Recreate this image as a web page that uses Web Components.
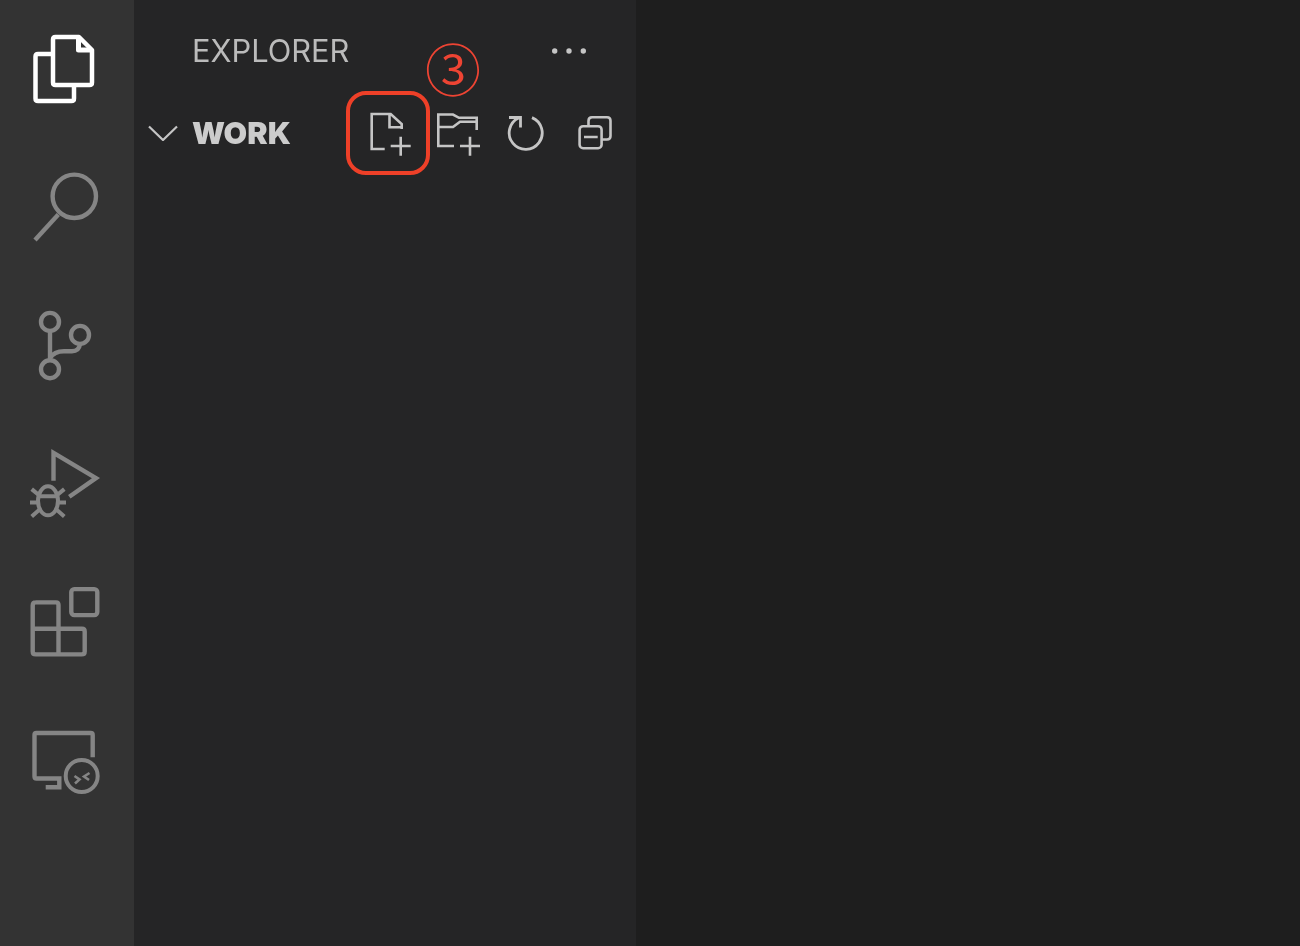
<!DOCTYPE html>
<html lang="en">
<head>
    <meta charset="UTF-8">
    <title>Explorer</title>
    <style>
        html, body { margin: 0; height: 100%; background: #1e1e1e; }
        body { font-family: Inter, "Liberation Sans", sans-serif; overflow: hidden; }
        vs-activity-icon svg, vs-tool-icon svg { display: block; }
    </style>
</head>
<body>
<vs-window>
    <vs-activity-bar slot="activity">
        <vs-activity-icon active>
            <svg width="134" height="138.4" viewBox="0 0 134 138.4" fill="none" stroke="currentColor" stroke-width="4.500" stroke-linejoin="round">
                <path d="M53 54H38q-2.500 0-2.500 2.500V98.500q0 2.500 2.500 2.500H71.500q2.500 0 2.500-2.500V85"/>
                <path d="M55.500 37H79L92 50V82.500q0 2.500-2.500 2.500H55.500q-2.500 0-2.500-2.500V39.500q0-2.500 2.500-2.500z"/>
                <path d="M78.500 37V50H92" stroke-width="5"/>
            </svg>
        </vs-activity-icon>
        <vs-activity-icon>
            <svg width="134" height="138.4" viewBox="0 138.400 134 138.400" fill="none" stroke="currentColor" stroke-width="4.400">
                <circle cx="74.300" cy="196.700" r="21.700"/>
                <path d="M58.300 215L35 240.500"/>
            </svg>
        </vs-activity-icon>
        <vs-activity-icon>
            <svg width="134" height="138.400" viewBox="0 276.800 134 138.400" fill="none" stroke="currentColor" stroke-width="4.400">
                <circle cx="50" cy="321.700" r="9"/>
                <circle cx="80" cy="334.700" r="9"/>
                <circle cx="50" cy="369" r="9"/>
                <path d="M50 331V360M80 344q-1 7-8 7H64q-10 0-14 7"/>
            </svg>
        </vs-activity-icon>
        <vs-activity-icon>
            <svg width="134" height="138.400" viewBox="0 415.200 134 138.400" fill="none" stroke="currentColor" stroke-width="4.400">
                <path d="M53.500 481V453L96 478.300L69.300 497"/>
                <g stroke-width="4">
                    <ellipse cx="48" cy="501" rx="10" ry="14.500"/>
                    <path d="M38 496.500H58M31.700 489.300L38.500 495M64.300 489.300L57.500 495M30 502.700H38.300M66 502.700H58M31.700 516.700L39.300 510M64.300 516.700L56.700 510"/>
                </g>
            </svg>
        </vs-activity-icon>
        <vs-activity-icon>
            <svg width="134" height="138.400" viewBox="0 553.600 134 138.400" fill="none" stroke="currentColor" stroke-width="4.400">
                <rect x="71.300" y="588.700" width="26" height="26" rx="3"/>
                <path d="M35.500 602H56q2.500 0 2.500 2.500V628.300H82q2.700 0 2.700 2.700V651q0 3-3 3H35.700q-3 0-3-3V605q0-3 3-3zM32.700 628.300H58.500V654"/>
            </svg>
        </vs-activity-icon>
        <vs-activity-icon>
            <svg width="134" height="138.400" viewBox="0 692 134 138.400" fill="none" stroke="currentColor" stroke-width="4.400">
                <path d="M92.700 757.300V735q0-2-2-2H36.500q-2 0-2 2V776.500q0 2 2 2H59.300V787.300H45.700"/>
                <circle cx="81.700" cy="776" r="16" fill="#333" stroke-width="4"/>
                <path d="M74.500 776L79.500 779.500L75 783.500M89.500 773L84 776.500L89 780" stroke-width="2.600"/>
            </svg>
        </vs-activity-icon>
    </vs-activity-bar>

    <vs-sidebar slot="sidebar">
        <vs-view-title>
            EXPLORER
            <svg slot="actions" width="40" height="10" viewBox="0 0 40 10" fill="#c5c5c5">
                <circle cx="5.700" cy="5" r="2.700"/><circle cx="20" cy="5" r="2.700"/><circle cx="34.300" cy="5" r="2.700"/>
            </svg>
        </vs-view-title>
        <vs-folder-row>
            <svg slot="twisty" width="30" height="16" viewBox="0 0 30 16" fill="none" stroke="#c5c5c5" stroke-width="2.200">
                <path d="M1 1.500L15 15L29 1.500"/>
            </svg>
            WORK
            <vs-tool-icon slot="tools">
                <svg width="70" height="70" viewBox="350 97 70 70" fill="none" stroke="currentColor" stroke-width="2.600">
                    <path d="M384.700 149H371.700V114H390.700L401.700 124V129M389.500 114V127.300H401.700M390.700 146H410.700M400.700 136.700V155.700"/>
                </svg>
            </vs-tool-icon>
            <vs-tool-icon slot="tools">
                <svg width="70" height="70" viewBox="420 97 70 70" fill="none" stroke="currentColor" stroke-width="2.600">
                    <path d="M454 146H438.300V114.500H453L459 117.800H476.700V130M438.300 127H453L460 121.800H476.700M460 146H480M470 136.700V155.700"/>
                </svg>
            </vs-tool-icon>
            <vs-tool-icon slot="tools">
                <svg width="70" height="70" viewBox="490 97 70 70" fill="none" stroke="currentColor" stroke-width="2.800">
                    <path d="M532 117.600A16.500 16.500 0 1 1 518.500 118M509 117.500H520.500V127.500"/>
                </svg>
            </vs-tool-icon>
            <vs-tool-icon slot="tools">
                <svg width="70" height="70" viewBox="560 97 70 70" fill="none" stroke="currentColor" stroke-width="2.600">
                    <rect x="579.600" y="126.200" width="22" height="22" rx="3.500"/>
                    <path d="M588.500 126V121q0-3.800 3.500-3.800H607q3.500 0 3.500 3.500V136q0 3.500-3.500 3.500H602M584 137H597.700"/>
                </svg>
            </vs-tool-icon>
        </vs-folder-row>
    </vs-sidebar>

    <vs-callout slot="overlay" number="③"></vs-callout>
</vs-window>

<script>
    function shadow(el, html) {
        let root = el.attachShadow({mode: 'open'});
        root.innerHTML = html;
        return root;
    }

    class VsWindow extends HTMLElement {
        constructor() {
            super();
            shadow(this, `<style>
                :host { display: flex; position: relative; width: 100%; height: 100%; background: #1e1e1e; }
                .editor { flex: 1; }
            </style>
            <slot name="activity"></slot>
            <slot name="sidebar"></slot>
            <div class="editor"></div>
            <slot name="overlay"></slot>`);
        }
    }

    class VsActivityBar extends HTMLElement {
        constructor() {
            super();
            shadow(this, `<style>
                :host { display: flex; flex-direction: column; width: 134px; flex: none; background: #333; }
            </style><slot></slot>`);
        }
    }

    class VsActivityIcon extends HTMLElement {
        constructor() {
            super();
            shadow(this, `<style>
                :host { display: block; height: 138.4px; color: #858585; }
                :host([active]) { color: #fff; }
            </style><slot></slot>`);
        }
    }

    class VsSidebar extends HTMLElement {
        constructor() {
            super();
            shadow(this, `<style>
                :host { display: flex; flex-direction: column; width: 502px; flex: none; background: #252526; }
            </style><slot></slot>`);
        }
    }

    class VsViewTitle extends HTMLElement {
        constructor() {
            super();
            shadow(this, `<style>
                :host { display: flex; align-items: center; justify-content: space-between; height: 102px; padding: 0 47px 0 58px; color: #bbb; font-size: 30.8px; font-weight: 400; }
                span { will-change: transform; margin-top: -2px; }
                ::slotted(svg) { display: block; }
            </style><span><slot></slot></span><slot name="actions"></slot>`);
        }
    }

    class VsFolderRow extends HTMLElement {
        constructor() {
            super();
            shadow(this, `<style>
                :host { display: flex; align-items: center; height: 70px; margin-top: -5px; color: #ccc; font-size: 30.5px; font-weight: 900; }
                .twisty { width: 58px; padding: 2px 0 0 14px; box-sizing: border-box; display: flex; }
                .name { flex: 1; will-change: transform; }
                .tools { display: flex; margin-right: 6px; }
            </style>
            <span class="twisty"><slot name="twisty"></slot></span>
            <span class="name"><slot></slot></span>
            <span class="tools"><slot name="tools"></slot></span>`);
        }
    }

    class VsToolIcon extends HTMLElement {
        constructor() {
            super();
            shadow(this, `<style>
                :host { display: block; width: 70px; height: 70px; color: #c5c5c5; }
            </style><slot></slot>`);
        }
    }

    class VsCallout extends HTMLElement {
        constructor() {
            super();
            let number = this.getAttribute('number') || '';
            shadow(this, `<style>
                :host { display: contents; }
                .box { position: absolute; left: 346px; top: 91px; width: 84px; height: 84px; box-sizing: border-box; border: 4px solid #ee4028; border-radius: 20px; }
                .num { position: absolute; left: 423px; top: 27px; width: 60px; text-align: center; color: #ee4433; font: 350 56px/80px "Noto Sans CJK JP", "Noto Sans CJK SC", sans-serif; will-change: transform; }
            </style><div class="box"></div><div class="num">${number}</div>`);
        }
    }

    customElements.define('vs-window', VsWindow);
    customElements.define('vs-activity-bar', VsActivityBar);
    customElements.define('vs-activity-icon', VsActivityIcon);
    customElements.define('vs-sidebar', VsSidebar);
    customElements.define('vs-view-title', VsViewTitle);
    customElements.define('vs-folder-row', VsFolderRow);
    customElements.define('vs-tool-icon', VsToolIcon);
    customElements.define('vs-callout', VsCallout);
</script>
</body>
</html>
